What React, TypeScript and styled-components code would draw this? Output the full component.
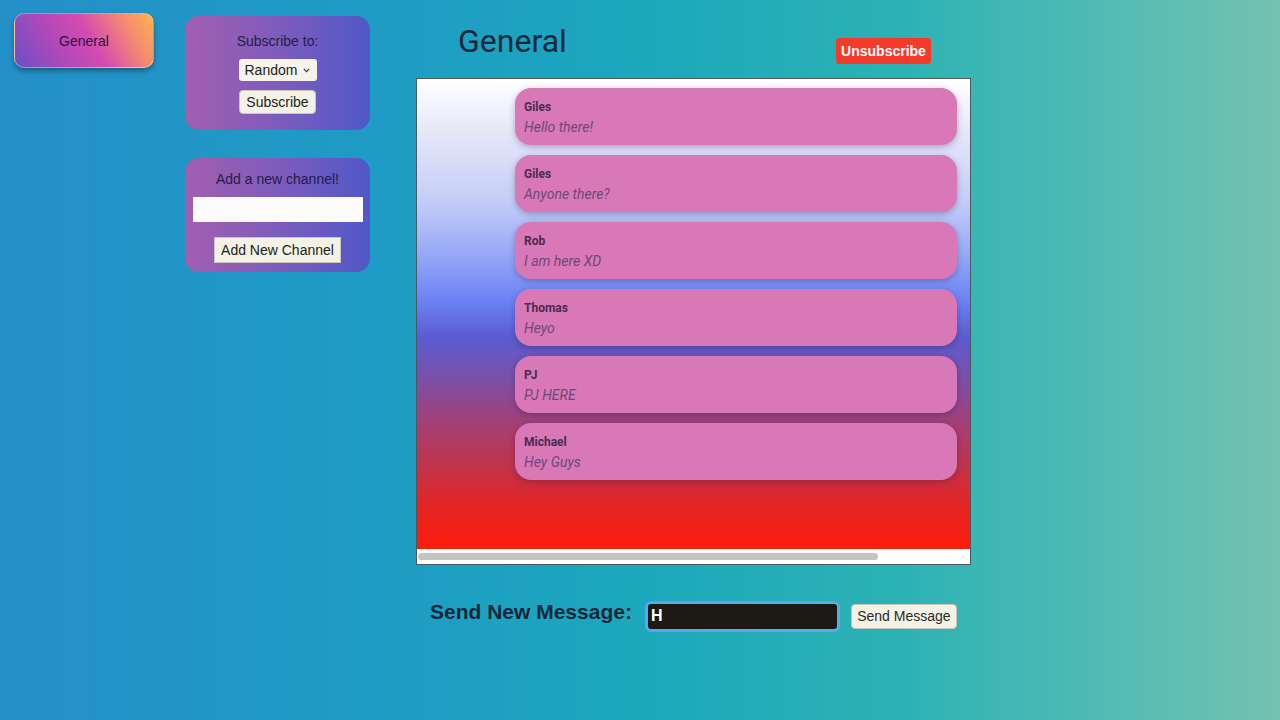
import React from "react";
import styled, { createGlobalStyle } from "styled-components";

const GlobalStyle = createGlobalStyle`
  html, body { margin: 0; padding: 0; height: 100%; }
  body {
    font-family: "Liberation Sans", Arial, sans-serif;
    background: linear-gradient(to right, #2490c8 0%, #1e9cc4 30%, #1ca8bc 50%, #2bb2b4 70%, #56bcb4 88%, #74c2b0 100%);
    min-height: 100vh;
  }
  #root { min-height: 100vh; }
`;

const Page = styled.div`
  display: flex;
  align-items: flex-start;
  min-height: 100vh;
`;

const ChannelList = styled.nav`
  display: flex;
  flex-direction: column;
  padding: 13px 0 0 14px;
  width: 140px;
`;

const ChannelButton = styled.button`
  width: 140px;
  height: 55px;
  border-radius: 10px;
  border: 1px solid rgba(255, 255, 255, 0.35);
  background: linear-gradient(60deg, #6a50c6 0%, #b748b8 35%, #d44cb0 55%, #f58a70 80%, #ffb24e 100%);
  box-shadow: 0 3px 5px rgba(0, 0, 0, 0.35);
  font-family: "Liberation Sans", Arial, sans-serif;
  font-size: 14px;
  color: #2a1440;
  cursor: pointer;
`;

const Forms = styled.aside`
  display: flex;
  flex-direction: column;
  gap: 28px;
  width: 185px;
  margin: 16px 0 0 31px;
`;

const Panel = styled.div<{ $pt: number; $pb: number; $h: number }>`
  box-sizing: border-box;
  height: ${(p) => p.$h}px;
  border-radius: 14px;
  background: linear-gradient(to right, #a25fae 0%, #7e5cbc 50%, #5058c8 100%);
  display: flex;
  flex-direction: column;
  align-items: center;
  padding: ${(p) => p.$pt}px 7px ${(p) => p.$pb}px;
`;

const PanelLabel = styled.div`
  font-size: 14px;
  line-height: 17px;
  color: #261c44;
`;

const SelectWrap = styled.div`
  position: relative;
  margin-top: 9px;
`;

const Select = styled.select`
  appearance: none;
  -webkit-appearance: none;
  width: 78px;
  height: 22px;
  border: none;
  border-radius: 3px;
  background: #f6f4ea;
  font-family: "Liberation Sans", Arial, sans-serif;
  font-size: 14px;
  color: #222;
  padding: 0 0 0 6px;
`;

const Chevron = styled.svg`
  position: absolute;
  right: 7px;
  top: 9px;
  pointer-events: none;
`;

const SmallButton = styled.button<{ $mt: number; $w: number; $h: number; $radius: number }>`
  margin-top: ${(p) => p.$mt}px;
  width: ${(p) => p.$w}px;
  height: ${(p) => p.$h}px;
  border-radius: ${(p) => p.$radius}px;
  border: 1px solid #c9c7bc;
  background: #f4f2e6;
  font-family: "Liberation Sans", Arial, sans-serif;
  font-size: 14px;
  color: #222;
  padding: 0;
  cursor: pointer;
`;

const ChannelInput = styled.input`
  box-sizing: border-box;
  margin-top: 9px;
  width: 170px;
  height: 25px;
  border: none;
  background: #fbfbfb;
  font-size: 14px;
`;

const Main = styled.main`
  display: flex;
  flex-direction: column;
  width: 555px;
  margin-left: 46px;
`;

const Header = styled.header`
  display: flex;
  align-items: flex-start;
  height: 78px;
  padding-left: 42px;
  padding-right: 40px;
  box-sizing: border-box;
`;

const Title = styled.h1`
  margin: 22px 0 0;
  font-family: Roboto, "Liberation Sans", sans-serif;
  font-weight: 400;
  font-size: 32px;
  line-height: 38px;
  color: #16283a;
`;

const Unsubscribe = styled.button`
  margin: 38px 0 0 auto;
  width: 95px;
  height: 26px;
  border: none;
  border-radius: 3px;
  background: #f23b2a;
  color: #fff;
  font-family: "Liberation Sans", Arial, sans-serif;
  font-weight: 700;
  font-size: 14px;
  padding: 0;
`;

const ChatBox = styled.section`
  box-sizing: border-box;
  height: 487px;
  border: 1px solid #4a5a60;
  background: #fff;
  display: flex;
  flex-direction: column;
  overflow: hidden;
`;

const ChatViewport = styled.div`
  flex: 1;
  overflow: hidden;
`;

const ChatContent = styled.div`
  box-sizing: border-box;
  width: 663px;
  height: 470px;
  padding-top: 9px;
  display: flex;
  flex-direction: column;
  gap: 10px;
  background: linear-gradient(
    to bottom,
    #ffffff 0%,
    #e4e6f8 12%,
    #c4cdf8 26%,
    #93a6f6 38%,
    #6c82f4 47%,
    #5a5cd0 55%,
    #7c4fa6 64%,
    #a24078 73%,
    #c0344c 82%,
    #e42424 91%,
    #ff1c0c 100%
  );
`;

const ScrollTrack = styled.div`
  flex: 0 0 15px;
  display: flex;
  align-items: center;
  padding: 0 1px;
  background: #fff;
`;

const ScrollThumb = styled.div`
  height: 7px;
  border-radius: 4px;
  background: #c4c4c4;
`;

const Message = styled.article`
  box-sizing: border-box;
  margin-left: 98px;
  width: 442px;
  height: 57px;
  padding: 12px 9px 9px;
  border-radius: 16px;
  background: #d978b6;
  box-shadow: 0 2px 6px rgba(40, 20, 60, 0.3);
  font-family: Roboto, "Liberation Sans", sans-serif;
`;

const Author = styled.div`
  font-size: 12px;
  line-height: 15px;
  font-weight: 700;
  color: #4a2c4c;
`;

const Body = styled.div`
  margin-top: 3px;
  font-size: 14px;
  line-height: 18px;
  font-style: italic;
  color: #6c4878;
`;

const SendRow = styled.form`
  display: flex;
  align-items: center;
  height: 30px;
  margin-top: 36px;
  padding-left: 14px;
`;

const SendLabel = styled.label`
  margin-bottom: 9px;
  font-family: "Liberation Sans", Arial, sans-serif;
  font-weight: 700;
  font-size: 21px;
  color: #15283a;
`;

const SendInput = styled.input`
  box-sizing: border-box;
  margin-left: 14px;
  width: 193px;
  height: 29px;
  border: 2px solid #5aaaf0;
  border-radius: 5px;
  background: #1c1a12;
  color: #fff;
  font-family: "Liberation Sans", Arial, sans-serif;
  font-size: 16px;
  font-weight: 700;
  padding: 0 3px;
  outline: none;
  box-shadow: 0 0 0 1px rgba(120, 180, 255, 0.5);
`;

const SendButton = styled.button`
  margin-left: 12px;
  width: 106px;
  height: 25px;
  border: 1px solid #c9c7bc;
  border-radius: 4px;
  background: #f4f2e6;
  font-family: "Liberation Sans", Arial, sans-serif;
  font-size: 14px;
  color: #2a2a2a;
  padding: 0;
`;

const messages = [
  { author: "Giles", text: "Hello there!" },
  { author: "Giles", text: "Anyone there?" },
  { author: "Rob", text: "I am here XD" },
  { author: "Thomas", text: "Heyo" },
  { author: "PJ", text: "PJ HERE" },
  { author: "Michael", text: "Hey Guys" },
];

const visibleRatio = 553 / 663;

export default function App() {
  return (
    <>
      <GlobalStyle />
      <Page>
        <ChannelList>
          <ChannelButton>General</ChannelButton>
        </ChannelList>
        <Forms>
          <Panel $pt={17} $pb={16} $h={114}>
            <PanelLabel>Subscribe to:</PanelLabel>
            <SelectWrap>
              <Select defaultValue="Random">
                <option>Random</option>
                <option>General</option>
              </Select>
              <Chevron width="7" height="5" viewBox="0 0 7 5">
                <path d="M0.8 0.8 L3.5 3.6 L6.2 0.8" fill="none" stroke="#333" strokeWidth="1.1" />
              </Chevron>
            </SelectWrap>
            <SmallButton $mt={9} $w={77} $h={24} $radius={4}>Subscribe</SmallButton>
          </Panel>
          <Panel $pt={13} $pb={9} $h={114}>
            <PanelLabel>Add a new channel!</PanelLabel>
            <ChannelInput type="text" />
            <SmallButton $mt={15} $w={127} $h={26} $radius={0}>Add New Channel</SmallButton>
          </Panel>
        </Forms>
        <Main>
          <Header>
            <Title>General</Title>
            <Unsubscribe>Unsubscribe</Unsubscribe>
          </Header>
          <ChatBox>
            <ChatViewport>
              <ChatContent>
                {messages.map((m, i) => (
                  <Message key={i}>
                    <Author>{m.author}</Author>
                    <Body>{m.text}</Body>
                  </Message>
                ))}
              </ChatContent>
            </ChatViewport>
            <ScrollTrack>
              <ScrollThumb style={{ width: `${visibleRatio * 100}%` }} />
            </ScrollTrack>
          </ChatBox>
          <SendRow onSubmit={(e) => e.preventDefault()}>
            <SendLabel htmlFor="msg">Send New Message:</SendLabel>
            <SendInput id="msg" type="text" defaultValue="H" autoFocus />
            <SendButton type="submit">Send Message</SendButton>
          </SendRow>
        </Main>
      </Page>
    </>
  );
}
